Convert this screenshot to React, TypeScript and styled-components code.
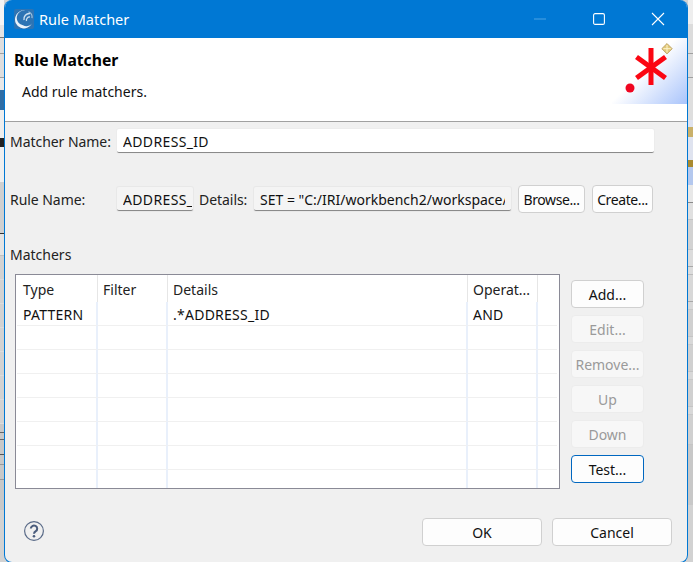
import styled, { createGlobalStyle } from 'styled-components'

const GlobalStyle = createGlobalStyle`
  html, body {
    margin: 0;
    padding: 0;
    height: 100%;
    overflow: hidden;
    background: #d2d2d2;
  }
  * {
    box-sizing: border-box;
  }
`

const Desktop = styled.div`
  display: flex;
  width: 693px;
  height: 562px;
  overflow: hidden;
  font-family: 'Noto Sans', 'Open Sans', sans-serif;
  font-size: 14px;
  color: #111;
`

const Strip = styled.div<{ $w: number }>`
  display: flex;
  flex-direction: column;
  flex: 0 0 ${({ $w }) => $w}px;
  overflow: hidden;
`

const Band = styled.div<{ $h: number; $bg: string; $line?: string }>`
  flex: 0 0 ${({ $h }) => $h}px;
  background: ${({ $bg }) => $bg};
  border-bottom: ${({ $line }) => ($line ? `1px solid ${$line}` : 'none')};
`

const Window = styled.div`
  display: flex;
  flex-direction: column;
  flex: 0 0 684px;
  height: 563px;
  background: #f0f0f0;
  border: 1px solid #0078d4;
  border-top: none;
  border-radius: 8px;
  overflow: hidden;
`

const TitleBar = styled.div`
  display: flex;
  align-items: center;
  flex: 0 0 38px;
  padding-left: 9px;
  background: #0078d4;
  color: #fff;
  font-size: 14.5px;
`

const TitleText = styled.span`
  margin-left: 5px;
  flex: 1;
`

const Controls = styled.div`
  display: flex;
  align-items: center;
  height: 100%;
`

const ControlButton = styled.div`
  display: flex;
  align-items: center;
  justify-content: center;
  width: 59px;
  height: 100%;
`

const Header = styled.div`
  display: flex;
  justify-content: space-between;
  flex: 0 0 84px;
  background: #fff;
  border-bottom: 1px solid #a0a0a0;
`

const HeaderText = styled.div`
  padding: 10px 0 0 9px;
`

const HeaderTitle = styled.div`
  font-size: 15.7px;
  font-weight: 700;
  line-height: 24px;
  color: #000;
`

const HeaderHint = styled.div`
  margin: 9px 0 0 8px;
  line-height: 22px;
  color: #111;
`

const Banner = styled.div`
  display: flex;
  width: 75px;
  height: 66px;
  background: linear-gradient(135deg, #fff 45%, #a9c4fb 100%);
`

const Body = styled.div`
  display: flex;
  flex-direction: column;
  flex: 1;
  padding: 7px 15px 0 5px;
`

const FormRow = styled.div`
  display: flex;
  align-items: center;
`

const RuleRow = styled(FormRow)`
  margin-top: 32px;
`

const Label = styled.label<{ $w: number; $gap?: number }>`
  flex: 0 0 ${({ $w }) => $w}px;
  margin-left: ${({ $gap }) => $gap ?? 0}px;
  padding-top: 2px;
  line-height: 20px;
  white-space: nowrap;
  letter-spacing: -0.05px;
  color: #222;
`

const TextField = styled.input<{ $w: number; $soft?: boolean; $caps?: boolean }>`
  width: ${({ $w }) => $w}px;
  height: 24px;
  padding: 2px ${({ $caps }) => ($caps ? 1 : 6)}px 0 6px;
  border: none;
  border-bottom: 1px solid #8a8a8a;
  border-radius: 2px;
  outline: none;
  background: ${({ $soft }) => ($soft ? '#f4f4f4' : '#fff')};
  box-shadow: 0 0 0 1px ${({ $soft }) => ($soft ? '#e8e8e8' : '#ececec')};
  font: inherit;
  letter-spacing: ${({ $caps }) => ($caps ? '0.35px' : '0')};
  color: #111;
`

const Button = styled.button<{ $w?: number; $gap?: number; $focus?: boolean; $tight?: boolean }>`
  width: ${({ $w }) => ($w ? `${$w}px` : '100%')};
  height: 28px;
  margin-left: ${({ $gap }) => $gap ?? 0}px;
  padding: 0;
  border: 1px solid ${({ $focus }) => ($focus ? '#0067c0' : '#d0d0d0')};
  border-radius: 4px;
  background: #fdfdfd;
  font: inherit;
  letter-spacing: ${({ $tight }) => ($tight ? '-0.4px' : '0')};
  color: #111;
  white-space: nowrap;

  &:disabled {
    border-color: #ececec;
    background: #f7f7f7;
    color: #9a9a9a;
  }
`

const SectionLabel = styled.div`
  margin-top: 32px;
  line-height: 20px;
  color: #222;
`

const MatcherArea = styled.div`
  display: flex;
  gap: 11px;
  margin: 9px 0 0 5px;
`

const TableFrame = styled.div`
  flex: 0 0 545px;
  height: 215px;
  padding-left: 1px;
  border: 1px solid #8a8a96;
  background: #fff;
`

const Grid = styled.table`
  width: 540px;
  table-layout: fixed;
  border-collapse: separate;
  border-spacing: 0;
`

const HeadCell = styled.th`
  height: 27px;
  padding: 2px 0 0 5px;
  border-right: 1px solid #e6e6e6;
  font-weight: 400;
  text-align: left;
  white-space: nowrap;
  overflow: hidden;
  color: #222;

  &:first-child {
    padding-left: 6px;
  }

  &:last-child {
    border-right: none;
  }
`

const Cell = styled.td<{ $last?: boolean }>`
  height: ${({ $last }) => ($last ? 18 : 24)}px;
  padding: 2px 0 0 5px;
  border-right: 2px solid #e9f0fb;
  border-bottom: ${({ $last }) => ($last ? 'none' : '1px solid #f0f0f0')};
  line-height: 20px;
  letter-spacing: 0.25px;
  color: #111;

  &:first-child {
    padding-left: 6px;
  }

  &:last-child {
    border-right: none;
  }
`

const SideButtons = styled.div`
  display: flex;
  flex-direction: column;
  gap: 7px;
  flex: 0 0 73px;
  padding-top: 6px;
`

const Footer = styled.div`
  display: flex;
  align-items: center;
  gap: 10px;
  margin-top: 29px;
  padding-left: 14px;
`

const HelpIcon = styled.svg`
  margin: 0 auto 2px 0;
`

const leftBands = [
  { h: 25, bg: '#f4f4f4' },
  { h: 13, bg: '#e4e4e4', line: '#777' },
  { h: 16, bg: '#dedede', line: '#a0a0a0' },
  { h: 24, bg: '#dedede', line: '#a0a0a0' },
  { h: 12, bg: '#e8e8e8' },
  { h: 20, bg: '#2f6ea6' },
  { h: 28, bg: '#eeeeee' },
  { h: 9, bg: '#222' },
  { h: 35, bg: '#efefef' },
  { h: 30, bg: '#d0d0d0' },
  { h: 22, bg: '#d0d0d0', line: '#333' },
  { h: 22, bg: '#e4e4e4', line: '#c0c0c0' },
  { h: 24, bg: '#d2d2d2', line: '#dcdcdc' },
  { h: 24, bg: '#d2d2d2', line: '#dcdcdc' },
  { h: 24, bg: '#d2d2d2', line: '#dcdcdc' },
  { h: 24, bg: '#d2d2d2', line: '#dcdcdc' },
  { h: 24, bg: '#d2d2d2', line: '#dcdcdc' },
  { h: 24, bg: '#d2d2d2', line: '#dcdcdc' },
  { h: 24, bg: '#d2d2d2', line: '#dcdcdc' },
  { h: 9, bg: '#c8c8c8', line: '#666' },
  { h: 7, bg: '#c8c8c8', line: '#666' },
  { h: 15, bg: '#c8c8c8', line: '#555' },
  { h: 10, bg: '#c8c8c8', line: '#999' },
  { h: 15, bg: '#c8c8c8', line: '#999' },
  { h: 30, bg: '#c8c8c8' },
]

const rightBands = [
  { h: 24, bg: '#eeeeee' },
  { h: 30, bg: '#dcdcdc', line: '#a0a0a0' },
  { h: 24, bg: '#dcdcdc', line: '#a0a0a0' },
  { h: 42, bg: '#dedede' },
  { h: 7, bg: '#dfe3ef' },
  { h: 10, bg: '#c9b06a' },
  { h: 23, bg: '#dfe3ef' },
  { h: 7, bg: '#a88a30' },
  { h: 18, bg: '#b4c8ee' },
  { h: 18, bg: '#e8e8e8', line: '#8a8a8a' },
  { h: 17, bg: '#e0e0e0', line: '#c4c4c4' },
  { h: 30, bg: '#d2d2d2', line: '#c4c4c4' },
  { h: 17, bg: '#dcdcdc', line: '#a8a8a8' },
  { h: 8, bg: '#dcdcdc', line: '#bcbcbc' },
  { h: 27, bg: '#d8d8d8', line: '#a8a8a8' },
  { h: 8, bg: '#d8d8d8', line: '#c8c8c8' },
  { h: 27, bg: '#d0d0d0', line: '#c4c4c4' },
  { h: 8, bg: '#d8d8d8', line: '#c8c8c8' },
  { h: 27, bg: '#d0d0d0', line: '#c4c4c4' },
  { h: 8, bg: '#d8d8d8', line: '#c8c8c8' },
  { h: 27, bg: '#d0d0d0', line: '#c4c4c4' },
  { h: 8, bg: '#d8d8d8', line: '#c8c8c8' },
  { h: 30, bg: '#d0d0d0', line: '#c4c4c4' },
  { h: 60, bg: '#c8c8c8' },
]

const rows = [
  ['PATTERN', '', '.*ADDRESS_ID', 'AND', ''],
  ...Array.from({ length: 6 }, () => ['', '', '', '', '']),
]

function AppGlyph() {
  return (
    <svg width="20" height="20" viewBox="0 0 20 20" aria-hidden="true">
      <rect width="20" height="20" rx="2" fill="#2d74b4" />
      <path d="M11.5 1.5a9 9 0 1 0 6.5 13 7 7 0 0 1-9 1.8A7.2 7.2 0 0 1 11.5 1.5z" fill="#eaf3fa" />
      <path d="M10 11a5.5 5.5 0 0 1 6-6.5" stroke="#cfe2f1" strokeWidth="1.4" fill="none" />
      <path d="M12.5 12a3.2 3.2 0 0 1 3.5-4" stroke="#cfe2f1" strokeWidth="1.3" fill="none" />
      <path d="M14.5 2.8a6 6 0 0 1 3.5 6.4" stroke="#9cc0dd" strokeWidth="1.2" fill="none" />
    </svg>
  )
}

function WizardGlyph() {
  return (
    <svg width="75" height="66" viewBox="612 38 75 66" aria-hidden="true">
      <g stroke="#fb0612" strokeWidth="5">
        <path d="M651 48v37" />
        <path d="M636.5 57l29 21" />
        <path d="M665.5 57l-29 21" />
      </g>
      <circle cx="630" cy="88" r="4.5" fill="#f00520" />
      <path d="M667 43.5l5.2 5.2-5.2 5.2-5.2-5.2z" fill="#e0c878" stroke="#b8995a" strokeWidth="0.8" />
      <path d="M667 45v7.5M663.3 48.7h7.5" stroke="#fff4cc" strokeWidth="1" />
    </svg>
  )
}

export default function App() {
  return (
    <>
      <GlobalStyle />
      <Desktop>
        <Strip $w={4}>
          {leftBands.map((b, i) => (
            <Band key={i} $h={b.h} $bg={b.bg} $line={b.line} />
          ))}
        </Strip>
        <Window>
          <TitleBar>
            <AppGlyph />
            <TitleText>Rule Matcher</TitleText>
            <Controls>
              <ControlButton>
                <svg width="12" height="2" aria-hidden="true">
                  <path d="M0 1h12" stroke="#4da3e4" strokeWidth="1" />
                </svg>
              </ControlButton>
              <ControlButton>
                <svg width="12" height="12" aria-hidden="true">
                  <rect x="0.6" y="0.6" width="10.8" height="10.8" rx="1.5" stroke="#fff" strokeWidth="1.1" fill="none" />
                </svg>
              </ControlButton>
              <ControlButton>
                <svg width="14" height="14" aria-hidden="true">
                  <path d="M1 1l12 12M13 1L1 13" stroke="#fff" strokeWidth="1.1" />
                </svg>
              </ControlButton>
            </Controls>
          </TitleBar>
          <Header>
            <HeaderText>
              <HeaderTitle>Rule Matcher</HeaderTitle>
              <HeaderHint>Add rule matchers.</HeaderHint>
            </HeaderText>
            <Banner>
              <WizardGlyph />
            </Banner>
          </Header>
          <Body>
            <FormRow>
              <Label $w={107}>Matcher Name:</Label>
              <TextField $w={537} $caps readOnly value="ADDRESS_ID" />
            </FormRow>
            <RuleRow>
              <Label $w={107}>Rule Name:</Label>
              <TextField $w={76} $soft $caps readOnly value="ADDRESS_ID" />
              <Label $w={55} $gap={6}>Details:</Label>
              <TextField $w={257} $soft readOnly value='SET = "C:/IRI/workbench2/workspace/IRI/address.set"' />
              <Button $w={67} $gap={7} $tight>Browse...</Button>
              <Button $w={61} $gap={7} $tight>Create...</Button>
            </RuleRow>
            <SectionLabel>Matchers</SectionLabel>
            <MatcherArea>
              <TableFrame>
                <Grid>
                  <colgroup>
                    <col width={81} />
                    <col width={70} />
                    <col width={300} />
                    <col width={70} />
                    <col width={19} />
                  </colgroup>
                  <thead>
                    <tr>
                      <HeadCell>Type</HeadCell>
                      <HeadCell>Filter</HeadCell>
                      <HeadCell>Details</HeadCell>
                      <HeadCell>Operat...</HeadCell>
                      <HeadCell />
                    </tr>
                  </thead>
                  <tbody>
                    {rows.map((row, i) => (
                      <tr key={i}>
                        {row.map((text, j) => (
                          <Cell key={j}>{text}</Cell>
                        ))}
                      </tr>
                    ))}
                    <tr>
                      {[0, 1, 2, 3, 4].map((j) => (
                        <Cell key={j} $last />
                      ))}
                    </tr>
                  </tbody>
                </Grid>
              </TableFrame>
              <SideButtons>
                <Button>Add...</Button>
                <Button disabled>Edit...</Button>
                <Button disabled>Remove...</Button>
                <Button disabled>Up</Button>
                <Button disabled>Down</Button>
                <Button $focus>Test...</Button>
              </SideButtons>
            </MatcherArea>
            <Footer>
              <HelpIcon width="20" height="20" viewBox="0 0 20 20" aria-hidden="true">
                <circle cx="10" cy="10" r="9.4" fill="none" stroke="#5a6b88" strokeWidth="1.2" />
                <path d="M6.8 7.6a3.2 3 0 1 1 5 2.5c-1.2.8-1.8 1.3-1.8 2.6" fill="none" stroke="#4a5c7c" strokeWidth="2" />
                <circle cx="10" cy="15.3" r="1.3" fill="#4a5c7c" />
              </HelpIcon>
              <Button $w={120}>OK</Button>
              <Button $w={120}>Cancel</Button>
            </Footer>
          </Body>
        </Window>
        <Strip $w={5}>
          {rightBands.map((b, i) => (
            <Band key={i} $h={b.h} $bg={b.bg} $line={b.line} />
          ))}
        </Strip>
      </Desktop>
    </>
  )
}
